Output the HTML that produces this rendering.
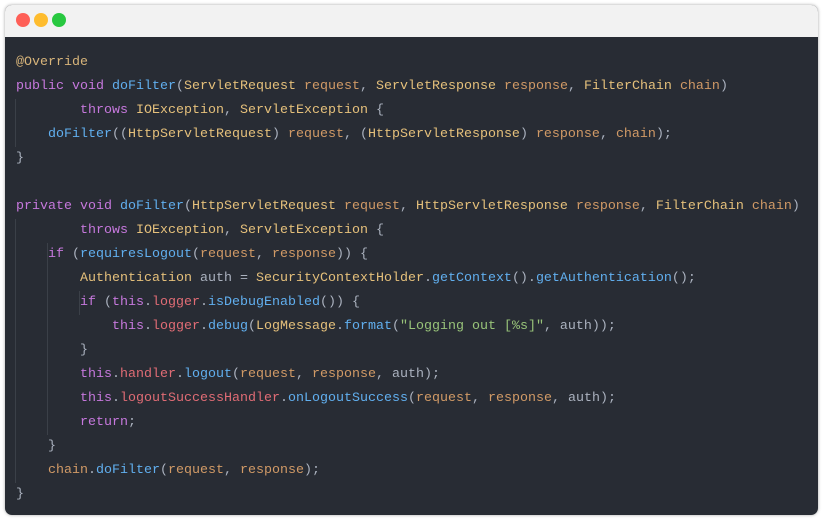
<!DOCTYPE html><html><head><style>
body{margin:0;background:#fff;width:823px;height:520px;overflow:hidden}
.win{position:absolute;left:5px;top:5px;width:813px;height:510px;border-radius:7px;overflow:hidden;box-shadow:0 0 3px rgba(0,0,0,.35);background:#282c34}
.bar{height:32px;background:#f2f2f2;position:relative}
.d{position:absolute;top:8px;width:14px;height:14px;border-radius:50%}
pre{margin:0;position:absolute;left:11px;top:46px;font-family:"Liberation Mono",monospace;font-size:13.33px;line-height:24px;color:#abb2bf}
.g{position:absolute;width:1px;background:#3b4048}
.k{color:#c678dd}.f{color:#61afef}.t{color:#e5c07b}.p{color:#d19a66}.r{color:#e06c75}.s{color:#98c379}.a{color:#d7b47a}
</style></head><body><div class="win"><div class="bar">
<div class="d" style="left:11px;background:#fe5f57"></div><div class="d" style="left:29px;background:#febc2e"></div><div class="d" style="left:47px;background:#28c840"></div></div>
<div class="g" style="left:10px;top:94px;height:48px"></div>
<div class="g" style="left:10px;top:214px;height:264px"></div>
<div class="g" style="left:42px;top:238px;height:192px"></div>
<div class="g" style="left:74px;top:286px;height:24px"></div>
<pre><span class="a">@Override</span>
<span class="k">public void</span> <span class="f">doFilter</span>(<span class="t">ServletRequest</span> <span class="p">request</span>, <span class="t">ServletResponse</span> <span class="p">response</span>, <span class="t">FilterChain</span> <span class="p">chain</span>)
        <span class="k">throws</span> <span class="t">IOException</span>, <span class="t">ServletException</span> {
    <span class="f">doFilter</span>((<span class="t">HttpServletRequest</span>) <span class="p">request</span>, (<span class="t">HttpServletResponse</span>) <span class="p">response</span>, <span class="p">chain</span>);
}

<span class="k">private void</span> <span class="f">doFilter</span>(<span class="t">HttpServletRequest</span> <span class="p">request</span>, <span class="t">HttpServletResponse</span> <span class="p">response</span>, <span class="t">FilterChain</span> <span class="p">chain</span>)
        <span class="k">throws</span> <span class="t">IOException</span>, <span class="t">ServletException</span> {
    <span class="k">if</span> (<span class="f">requiresLogout</span>(<span class="p">request</span>, <span class="p">response</span>)) {
        <span class="t">Authentication</span> auth = <span class="t">SecurityContextHolder</span>.<span class="f">getContext</span>().<span class="f">getAuthentication</span>();
        <span class="k">if</span> (<span class="k">this</span>.<span class="r">logger</span>.<span class="f">isDebugEnabled</span>()) {
            <span class="k">this</span>.<span class="r">logger</span>.<span class="f">debug</span>(<span class="t">LogMessage</span>.<span class="f">format</span>(<span class="s">"Logging out [%s]"</span>, auth));
        }
        <span class="k">this</span>.<span class="r">handler</span>.<span class="f">logout</span>(<span class="p">request</span>, <span class="p">response</span>, auth);
        <span class="k">this</span>.<span class="r">logoutSuccessHandler</span>.<span class="f">onLogoutSuccess</span>(<span class="p">request</span>, <span class="p">response</span>, auth);
        <span class="k">return</span>;
    }
    <span class="p">chain</span>.<span class="f">doFilter</span>(<span class="p">request</span>, <span class="p">response</span>);
}</pre></div></body></html>
